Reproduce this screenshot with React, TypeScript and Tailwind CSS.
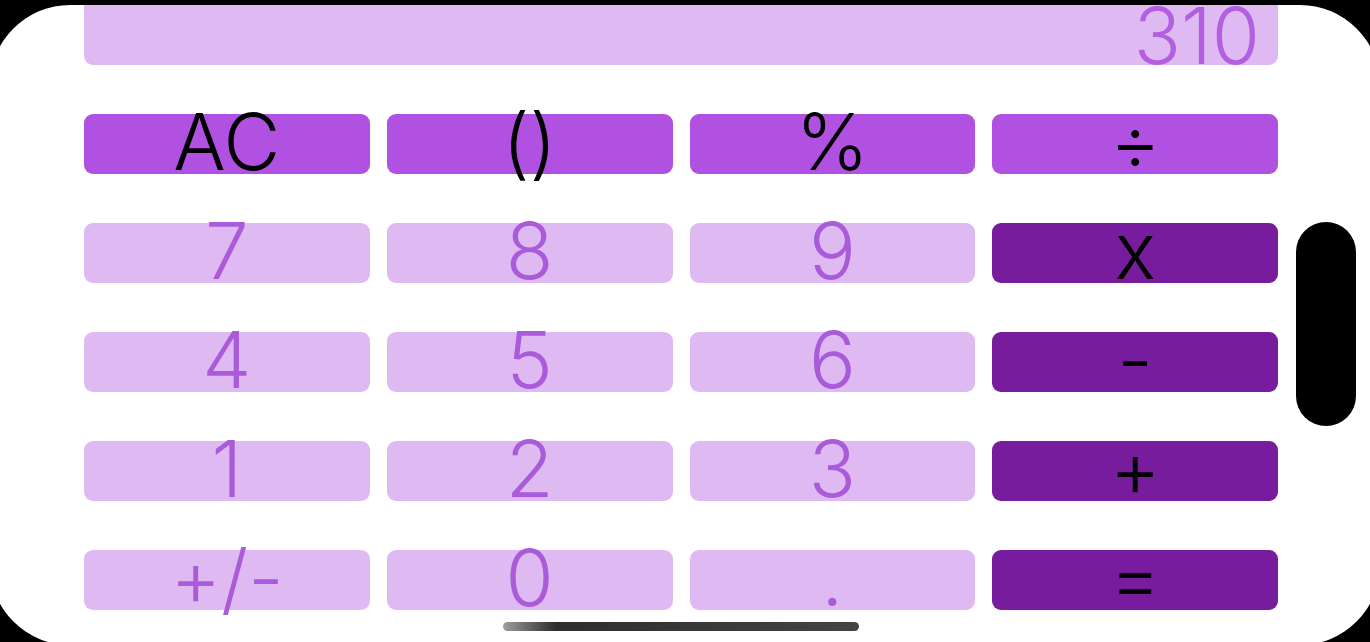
import React from "react";

type Key = { label: string; kind: "num" | "fn" | "op" };

const keys: Key[] = [
  { label: "AC", kind: "fn" },
  { label: "()", kind: "fn" },
  { label: "%", kind: "fn" },
  { label: "÷", kind: "fn" },
  { label: "7", kind: "num" },
  { label: "8", kind: "num" },
  { label: "9", kind: "num" },
  { label: "x", kind: "op" },
  { label: "4", kind: "num" },
  { label: "5", kind: "num" },
  { label: "6", kind: "num" },
  { label: "-", kind: "op" },
  { label: "1", kind: "num" },
  { label: "2", kind: "num" },
  { label: "3", kind: "num" },
  { label: "+", kind: "op" },
  { label: "+/-", kind: "num" },
  { label: "0", kind: "num" },
  { label: ".", kind: "num" },
  { label: "=", kind: "op" },
];

const kindClass: Record<Key["kind"], string> = {
  num: "bg-[#dfbaf2] text-[#a95bd9]",
  fn: "bg-[#b051e1] text-black",
  op: "bg-[#761c9d] text-black",
};

export default function App() {
  return (
    <div className="relative w-[1370px] h-[642px] overflow-hidden bg-black pt-[5px] font-['Inter','Liberation_Sans',sans-serif]">
      <div className="-mx-[10px] h-[640px] rounded-[80px] bg-white overflow-hidden pl-[94px] pr-[102px]">
        <div className="h-[60px] rounded-b-[9px] bg-[#dfbaf2] text-right pr-[18px] text-[78px] leading-[61px] font-light text-[#b45ee2] whitespace-nowrap">
          310
        </div>
        <div className="grid grid-cols-4 gap-x-[17px] gap-y-[49px] mt-[49px]">
          {keys.map((k) => (
            <button
              key={k.label}
              className={`h-[60px] pb-[4px] rounded-[9px] text-center text-[78px] leading-[56px] font-light overflow-visible whitespace-nowrap ${kindClass[k.kind]}`}
            >
              {k.label}
            </button>
          ))}
        </div>
      </div>
      <div className="absolute left-[1296px] top-[222px] w-[60px] h-[204px] rounded-full bg-black" />
      <div className="absolute left-[503px] top-[622px] w-[356px] h-[9px] rounded-full bg-gradient-to-r from-[#a0a0a0] via-[#2e2e2e] via-[15%] to-[#444444]" />
    </div>
  );
}
